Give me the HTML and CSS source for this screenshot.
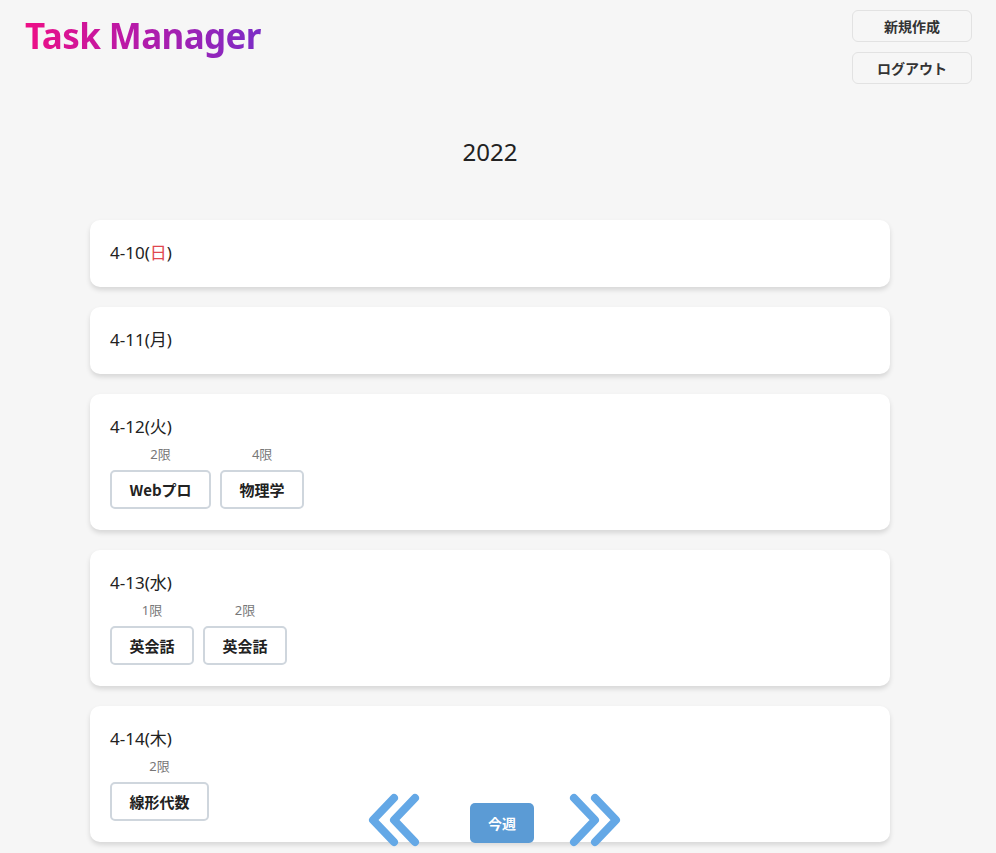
FILE: index.html
```html
<!DOCTYPE html>
<html lang="ja">
<head>
<meta charset="utf-8">
<title>Task Manager</title>
<link rel="stylesheet" href="styles.css">
</head>
<body>
<div class="page">
  <header class="header">
    <h1 class="logo">Task Manager</h1>
    <div class="actions">
      <button class="action-btn">新規作成</button>
      <button class="action-btn">ログアウト</button>
    </div>
  </header>

  <main class="main">
    <div class="year">2022</div>

    <section class="card">
      <div class="date">4-10(<span class="sun">日</span>)</div>
    </section>

    <section class="card">
      <div class="date">4-11(月)</div>
    </section>

    <section class="card">
      <div class="date">4-12(火)</div>
      <div class="tasks">
        <div class="task"><span class="period">2限</span><button class="task-btn">Webプロ</button></div>
        <div class="task"><span class="period">4限</span><button class="task-btn">物理学</button></div>
      </div>
    </section>

    <section class="card">
      <div class="date">4-13(水)</div>
      <div class="tasks">
        <div class="task"><span class="period">1限</span><button class="task-btn">英会話</button></div>
        <div class="task"><span class="period">2限</span><button class="task-btn">英会話</button></div>
      </div>
    </section>

    <section class="card">
      <div class="date">4-14(木)</div>
      <div class="tasks">
        <div class="task"><span class="period">2限</span><button class="task-btn">線形代数</button></div>
      </div>
    </section>
  </main>
</div>

<nav class="week-nav">
  <a class="chev chev-prev" aria-label="前の週">
    <svg width="52" height="54" viewBox="0 0 52 54"><polyline points="26,5 5,27 26,49" fill="none" stroke="#64a8e6" stroke-width="8" stroke-linecap="round" stroke-linejoin="round"/><polyline points="47,5 26,27 47,49" fill="none" stroke="#64a8e6" stroke-width="8" stroke-linecap="round" stroke-linejoin="round"/></svg>
  </a>
  <button class="today-btn">今週</button>
  <a class="chev chev-next" aria-label="次の週">
    <svg width="52" height="54" viewBox="0 0 52 54"><polyline points="5,5 26,27 5,49" fill="none" stroke="#64a8e6" stroke-width="8" stroke-linecap="round" stroke-linejoin="round"/><polyline points="26,5 47,27 26,49" fill="none" stroke="#64a8e6" stroke-width="8" stroke-linecap="round" stroke-linejoin="round"/></svg>
  </a>
</nav>
</body>
</html>
```

FILE: styles.css
```css
html, body {
  margin: 0;
  padding: 0;
  background: #f6f6f6;
}

body {
  font-family: "Noto Sans", "Noto Sans CJK JP", sans-serif;
  color: #222;
}

.page {
  width: 964px;
  margin-left: 8px;
  padding-bottom: 60px;
}

.header {
  display: flex;
  justify-content: space-between;
  align-items: flex-start;
  padding-top: 10px;
}

.logo {
  margin: 2px 0 0 17px;
  font-size: 35px;
  line-height: 48px;
  font-weight: 700;
  letter-spacing: -0.6px;
  background: linear-gradient(90deg, #ee0f86 0%, #b81aa8 45%, #7b2cc6 100%);
  -webkit-background-clip: text;
  background-clip: text;
  color: transparent;
}

.actions {
  display: flex;
  flex-direction: column;
  gap: 10px;
}

.action-btn {
  width: 120px;
  height: 32px;
  background: #f6f6f6;
  border: 1px solid #e2e2e2;
  border-radius: 6px;
  font-family: "Noto Sans CJK JP", sans-serif;
  font-size: 14px;
  font-weight: 700;
  color: #333;
  padding: 0;
}

.main {
  display: flex;
  flex-direction: column;
  align-items: center;
}

.year {
  margin-top: 52px;
  margin-bottom: 52px;
  font-size: 24px;
  line-height: 32px;
  color: #222;
}

.card {
  width: 800px;
  box-sizing: border-box;
  background: #fff;
  border-radius: 10px;
  box-shadow: 0 3px 5px rgba(0, 0, 0, 0.13);
  padding: 20px 20px 21px;
  margin-bottom: 20px;
}

.date {
  font-size: 17px;
  line-height: 26px;
  color: #222;
}

.sun {
  color: #e0474f;
}

.tasks {
  display: flex;
  gap: 9px;
  margin-top: 5px;
}

.task {
  display: flex;
  flex-direction: column;
  align-items: center;
}

.period {
  font-size: 13px;
  line-height: 18px;
  color: #777;
  margin-bottom: 7px;
}

.task-btn {
  height: 39px;
  padding: 0 17.5px;
  background: #fff;
  border: 2px solid #cfd6dd;
  border-radius: 5px;
  font-family: "Noto Sans CJK JP", sans-serif;
  font-size: 15px;
  font-weight: 700;
  color: #222;
}

.week-nav {
  position: fixed;
  left: 0;
  bottom: 6px;
  width: 996px;
  box-sizing: border-box;
  padding-right: 7px;
  display: flex;
  justify-content: center;
  align-items: center;
}

.chev {
  display: block;
  width: 52px;
  height: 54px;
  cursor: pointer;
}

.chev svg {
  display: block;
}

.chev-prev {
  margin-right: 50px;
}

.chev-next {
  margin-left: 35px;
}

.today-btn {
  width: 64px;
  height: 40px;
  margin-top: 6px;
  background: #5b9bd5;
  border: none;
  border-radius: 5px;
  color: #fff;
  font-family: "Noto Sans CJK JP", sans-serif;
  font-size: 14px;
  font-weight: 700;
}
```
